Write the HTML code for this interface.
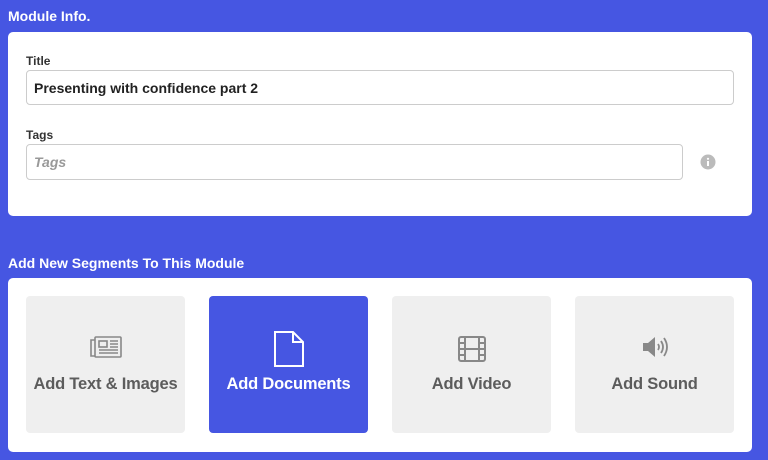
<!DOCTYPE html>
<html><head><style>
*{box-sizing:border-box;margin:0;padding:0}
body{width:768px;height:460px;background:#4656e2;font-family:"Liberation Sans",sans-serif;position:relative;overflow:hidden}
.h{position:absolute;left:8px;color:#fff;font-weight:bold;font-size:14px}
.card{position:absolute;left:8px;width:744px;background:#fff;border-radius:5px}
.lbl{position:absolute;left:26px;font-size:12px;font-weight:bold;color:#333}
.inp{position:absolute;left:26px;border:1px solid #ccc;border-radius:4px;background:#fff;font-size:14px;padding-left:7px;display:flex;align-items:center}
.tile{position:absolute;top:296px;width:159px;height:137px;background:#efefef;border-radius:4px;color:#5c5c5c;font-weight:bold;font-size:16.5px;text-align:center;letter-spacing:-0.2px}
.tile svg{position:absolute;left:50%;top:40px;transform:translateX(-50%)}
.tile span{position:absolute;left:0;right:0;top:79px}
</style></head><body>
<div class="h" style="top:8px">Module Info.</div>
<div class="card" style="top:32px;height:184px"></div>
<div class="lbl" style="top:54px">Title</div>
<div class="inp" style="top:70px;width:708px;height:35px;color:#222;font-weight:bold">Presenting with confidence part 2</div>
<div class="lbl" style="top:128px">Tags</div>
<div class="inp" style="top:144px;width:657px;height:36px;color:#999;font-style:italic;font-weight:bold">Tags</div>
<svg style="position:absolute;left:700px;top:154px" width="16" height="16" viewBox="0 0 16 16"><circle cx="8" cy="8" r="7.5" fill="#bbb"/><rect x="7" y="7" width="2" height="5" fill="#fff"/><circle cx="8" cy="4.8" r="1.1" fill="#fff"/></svg>
<div class="h" style="top:255px">Add New Segments To This Module</div>
<div class="card" style="top:278px;height:174px"></div>
<div class="tile" style="left:26px"><svg width="32" height="22" viewBox="0 0 32 22" fill="none" stroke="#888" stroke-width="1.6"><rect x="5" y="1" width="26" height="20" rx="1"/><path d="M5 4H1v16h4"/><rect x="9" y="5" width="8" height="6"/><path d="M20 5h8M20 8h8M20 11h8M9 14h19M9 17h19"/></svg><span>Add Text &amp; Images</span></div>
<div class="tile" style="left:209px;background:#4656e2;color:#fff"><svg style="top:35px" width="32" height="36" viewBox="0 0 32 36" fill="none" stroke="#fff" stroke-width="2"><path d="M2 1h18l10 10v24H2z"/><path d="M20 1v10h10"/></svg><span>Add Documents</span></div>
<div class="tile" style="left:392px"><svg width="28" height="26" viewBox="0 0 28 26" fill="none" stroke="#888" stroke-width="2"><rect x="1" y="1" width="26" height="24" rx="2"/><path d="M7 1v24M21 1v24M7 13h14M1 7h6M1 13h6M1 19h6M21 7h6M21 13h6M21 19h6"/></svg><span>Add Video</span></div>
<div class="tile" style="left:575px"><svg width="26" height="22" viewBox="0 0 26 22"><path d="M1 7h5l7-6v20l-7-6H1z" fill="#888"/><path d="M16 8q2 3 0 6M19 5q4 6 0 12M22 2q6 9 0 18" stroke="#888" stroke-width="1.8" fill="none"/></svg><span>Add Sound</span></div>
</body></html>
